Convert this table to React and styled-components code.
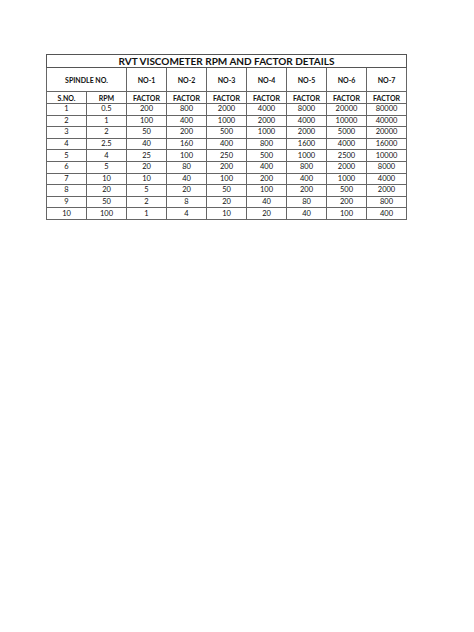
import React from 'react';
import styled, { createGlobalStyle } from 'styled-components';

const GlobalStyle = createGlobalStyle`
    body {
        margin: 0;
        background: #ffffff;
        font-family: Lato, "Liberation Sans", sans-serif;
    }
`;

const factors = [
    [1, '0.5', 200, 800, 2000, 4000, 8000, 20000, 80000],
    [2, '1', 100, 400, 1000, 2000, 4000, 10000, 40000],
    [3, '2', 50, 200, 500, 1000, 2000, 5000, 20000],
    [4, '2.5', 40, 160, 400, 800, 1600, 4000, 16000],
    [5, '4', 25, 100, 250, 500, 1000, 2500, 10000],
    [6, '5', 20, 80, 200, 400, 800, 2000, 8000],
    [7, '10', 10, 40, 100, 200, 400, 1000, 4000],
    [8, '20', 5, 20, 50, 100, 200, 500, 2000],
    [9, '50', 2, 8, 20, 40, 80, 200, 800],
    [10, '100', 1, 4, 10, 20, 40, 100, 400],
];

const spindles = ['NO-1', 'NO-2', 'NO-3', 'NO-4', 'NO-5', 'NO-6', 'NO-7'];

function App() {
    return (
        <Page>
            <GlobalStyle />
            <Table>
                <colgroup>
                    {Array.from({ length: 9 }).map((_, i) => <Col key={i} />)}
                </colgroup>
                <tbody>
                    <tr>
                        <Title colSpan={9}>RVT VISCOMETER RPM AND FACTOR DETAILS</Title>
                    </tr>
                    <tr>
                        <Head colSpan={2} $tall>SPINDLE NO.</Head>
                        {spindles.map((s) => <Head key={s} $tall>{s}</Head>)}
                    </tr>
                    <tr>
                        <Head>S.NO.</Head>
                        <Head>RPM</Head>
                        {spindles.map((s) => <Head key={s}>FACTOR</Head>)}
                    </tr>
                    {factors.map((row) => (
                        <Row key={row[0]} $heavy={row[0] === 3 || row[0] === 10}>
                            {row.map((v, i) => <Cell key={i}>{v}</Cell>)}
                        </Row>
                    ))}
                </tbody>
            </Table>
        </Page>
    );
}

const Page = styled.div`
    width: 474px;
    height: 632px;
    padding: 54px 0 0 46px;
    box-sizing: border-box;
`;
const Table = styled.table`
    border-collapse: collapse;
    table-layout: fixed;
    width: 361px;
    color: #111;
`;
const Col = styled.col`
    width: 40px;
`;
const Title = styled.td`
    border: 1px solid #555;
    height: 12px;
    padding: 0;
    text-align: center;
    font-size: 10px;
    font-weight: 700;
    line-height: 12px;
`;
const Head = styled.td`
    border: 1px solid #666;
    height: ${(p) => (p.$tall ? '23px' : '11px')};
    padding: 0;
    text-align: center;
    font-size: 7px;
    font-weight: 700;
    line-height: 10px;
`;
const Row = styled.tr`
    td {
        border-top: ${(p) => (p.$heavy ? '1px solid #111' : '1px solid #666')};
    }
`;
const Cell = styled.td`
    border: 1px solid #666;
    height: 10.6px;
    padding: 0;
    text-align: center;
    font-size: 7.5px;
    line-height: 10px;
`;

export default App;
